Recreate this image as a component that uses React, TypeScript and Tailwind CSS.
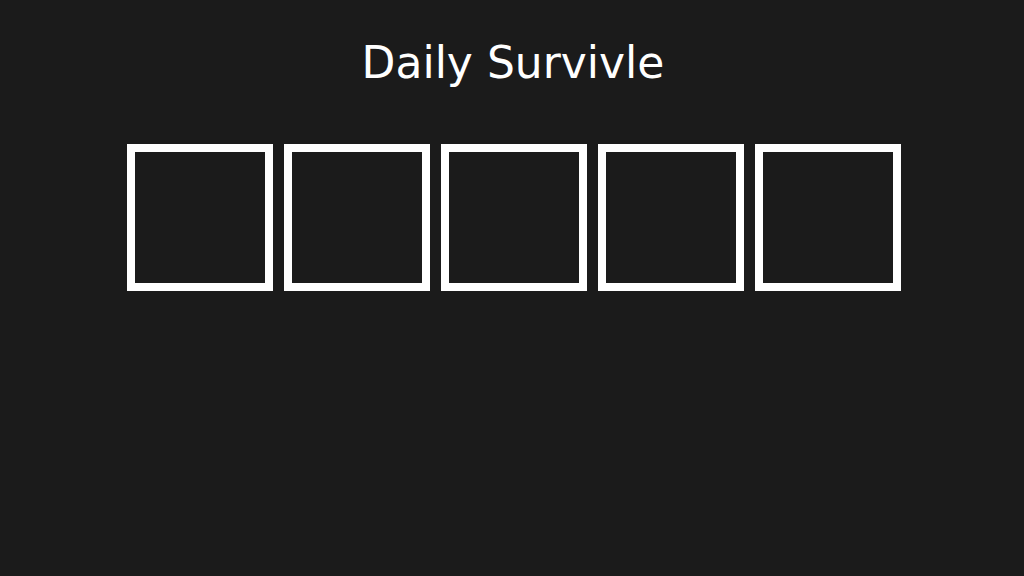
export default function App() {
  const slots = [0, 1, 2, 3, 4];

  return (
    <div className="min-h-screen w-full bg-[#1b1b1b] text-white flex flex-col items-center font-['DejaVu_Sans',sans-serif]">
      <h1 className="mt-[37px] text-[44px] leading-[52px] font-normal ml-[2px]">Daily Survivle</h1>

      {/* Guess slots */}
      <div className="mt-[55px] flex gap-[11px] ml-[4px]">
        {slots.map((i) => (
          <div key={i} className="w-[146px] h-[147px] border-[8px] border-white bg-[#1b1b1b]" />
        ))}
      </div>
    </div>
  );
}
